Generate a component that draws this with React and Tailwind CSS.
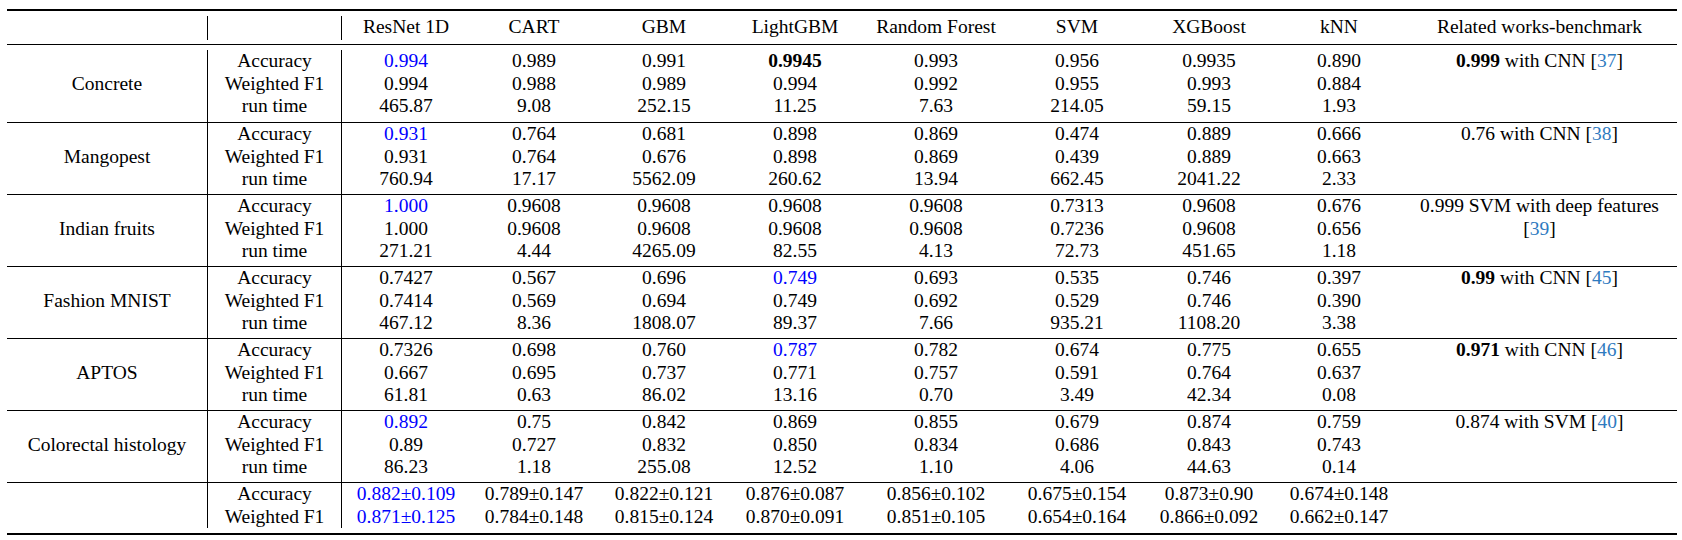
import React from "react";

const cols = [
  "w-[200px]",
  "w-[134px] border-l border-black",
  "w-[129px] border-l border-black",
  "w-[128px]",
  "w-[132px]",
  "w-[130px]",
  "w-[152px]",
  "w-[130px]",
  "w-[134px]",
  "w-[126px]",
  "w-[275px]",
];

const heads = ["", "", "ResNet 1D", "CART", "GBM", "LightGBM", "Random Forest", "SVM", "XGBoost", "kNN", "Related works-benchmark"];

const Cite = ({ n }) => (
  <>
    [<span className="text-[#2f7bbf]">{n}</span>]
  </>
);

// "*" = blue (best), "!" = bold
const groups = [
  {
    name: "Concrete",
    rows: [
      ["*0.994", "0.989", "0.991", "!0.9945", "0.993", "0.956", "0.9935", "0.890"],
      ["0.994", "0.988", "0.989", "0.994", "0.992", "0.955", "0.993", "0.884"],
      ["465.87", "9.08", "252.15", "11.25", "7.63", "214.05", "59.15", "1.93"],
    ],
    related: [
      <>
        <span className="font-bold">0.999</span> with CNN <Cite n="37" />
      </>,
    ],
  },
  {
    name: "Mangopest",
    rows: [
      ["*0.931", "0.764", "0.681", "0.898", "0.869", "0.474", "0.889", "0.666"],
      ["0.931", "0.764", "0.676", "0.898", "0.869", "0.439", "0.889", "0.663"],
      ["760.94", "17.17", "5562.09", "260.62", "13.94", "662.45", "2041.22", "2.33"],
    ],
    related: [
      <>
        0.76 with CNN <Cite n="38" />
      </>,
    ],
  },
  {
    name: "Indian fruits",
    rows: [
      ["*1.000", "0.9608", "0.9608", "0.9608", "0.9608", "0.7313", "0.9608", "0.676"],
      ["1.000", "0.9608", "0.9608", "0.9608", "0.9608", "0.7236", "0.9608", "0.656"],
      ["271.21", "4.44", "4265.09", "82.55", "4.13", "72.73", "451.65", "1.18"],
    ],
    related: [<>0.999 SVM with deep features</>, <Cite n="39" />],
  },
  {
    name: "Fashion MNIST",
    rows: [
      ["0.7427", "0.567", "0.696", "*0.749", "0.693", "0.535", "0.746", "0.397"],
      ["0.7414", "0.569", "0.694", "0.749", "0.692", "0.529", "0.746", "0.390"],
      ["467.12", "8.36", "1808.07", "89.37", "7.66", "935.21", "1108.20", "3.38"],
    ],
    related: [
      <>
        <span className="font-bold">0.99</span> with CNN <Cite n="45" />
      </>,
    ],
  },
  {
    name: "APTOS",
    rows: [
      ["0.7326", "0.698", "0.760", "*0.787", "0.782", "0.674", "0.775", "0.655"],
      ["0.667", "0.695", "0.737", "0.771", "0.757", "0.591", "0.764", "0.637"],
      ["61.81", "0.63", "86.02", "13.16", "0.70", "3.49", "42.34", "0.08"],
    ],
    related: [
      <>
        <span className="font-bold">0.971</span> with CNN <Cite n="46" />
      </>,
    ],
  },
  {
    name: "Colorectal histology",
    rows: [
      ["*0.892", "0.75", "0.842", "0.869", "0.855", "0.679", "0.874", "0.759"],
      ["0.89", "0.727", "0.832", "0.850", "0.834", "0.686", "0.843", "0.743"],
      ["86.23", "1.18", "255.08", "12.52", "1.10", "4.06", "44.63", "0.14"],
    ],
    related: [
      <>
        0.874 with SVM <Cite n="40" />
      </>,
    ],
  },
];

const average = [
  ["*0.882±0.109", "0.789±0.147", "0.822±0.121", "0.876±0.087", "0.856±0.102", "0.675±0.154", "0.873±0.90", "0.674±0.148"],
  ["*0.871±0.125", "0.784±0.148", "0.815±0.124", "0.870±0.091", "0.851±0.105", "0.654±0.164", "0.866±0.092", "0.662±0.147"],
];

const metrics = ["Accuracy", "Weighted F1", "run time"];

const Val = ({ v }) => {
  if (v.startsWith("*")) return <span className="text-[#0000ff]">{v.slice(1)}</span>;
  if (v.startsWith("!")) return <span className="font-bold">{v.slice(1)}</span>;
  return v;
};

const Row = ({ cells, h }) => (
  <div className={`flex ${h}`}>
    {cells.map((c, i) => (
      <div key={i} className={`${cols[i]} whitespace-nowrap text-center leading-[22.5px]`}>
        {c}
      </div>
    ))}
  </div>
);

const rowHeights = ["h-[22.5px]", "h-[22.5px]", "h-[26px]"];

export default function App() {
  return (
    <div className="w-[1682px] h-[540px] bg-white pt-[9px] font-serif text-[19.5px] text-black">
      <div className="ml-[7px] w-[1670px] font-['Liberation_Serif',_serif]">
        <div className="h-[2px] bg-black" />

        {/* header */}
        <div className="pt-[5px] pb-[4px] border-b border-black">
          <div className="flex h-[24px]">
            {heads.map((t, i) => (
              <div key={i} className={`${cols[i]} whitespace-nowrap text-center leading-[21px]`}>
                {t}
              </div>
            ))}
          </div>
        </div>

        {groups.map((g, gi) => (
          <div key={g.name} className={gi === 0 ? "pt-[5px]" : "border-t border-black"}>
            {g.rows.map((r, ri) => (
              <Row
                key={ri}
                h={gi === 0 && ri === 2 ? "h-[27px]" : rowHeights[ri]}
                cells={[
                  ri === 1 ? g.name : "",
                  metrics[ri],
                  ...r.map((v, vi) => <Val key={vi} v={v} />),
                  g.related[ri] || "",
                ]}
              />
            ))}
          </div>
        ))}

        {/* average */}
        <div className="border-t border-black pb-[5px]">
          {average.map((r, ri) => (
            <Row
              key={ri}
              h="h-[22.5px]"
              cells={["", metrics[ri], ...r.map((v, vi) => <Val key={vi} v={v} />), ""]}
            />
          ))}
        </div>

        <div className="h-[2px] bg-black" />
      </div>
    </div>
  );
}
